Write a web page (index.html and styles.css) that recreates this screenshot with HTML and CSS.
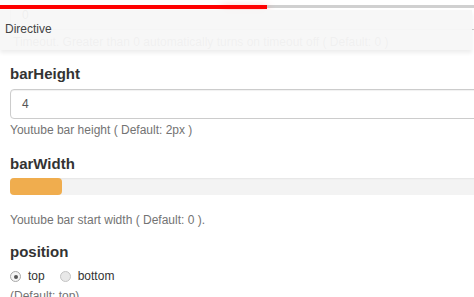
FILE: index.html
```html
<!DOCTYPE html>
<html>
<head>
<meta charset="utf-8">
<link rel="stylesheet" href="styles.css">
</head>
<body>
<div class="content">
  <div class="input ghost-input">0</div>
  <p class="help ghost-help">Timeout. Greater than 0 automatically turns on timeout off ( Default: 0 )</p>

  <h3 class="label">barHeight</h3>
  <div class="input">4</div>
  <p class="help">Youtube bar height ( Default: 2px )</p>

  <h3 class="label label-gap">barWidth</h3>
  <div class="slider"><div class="slider-fill" style="width:52px"></div></div>
  <p class="help help-slider">Youtube bar start width ( Default: 0 ).</p>

  <h3 class="label label-pos">position</h3>
  <div class="radios">
    <label class="radio"><span class="dot checked"></span>top</label>
    <label class="radio"><span class="dot"></span>bottom</label>
  </div>
  <p class="help help-last">(Default: top)</p>
</div>

<div class="topstrip">
  <div class="track"><div class="bar" style="width:267px"><div class="peg"></div></div></div>
</div>
<div class="header">Directive</div>
</body>
</html>
```

FILE: styles.css
```css
html, body {
  margin: 0;
  padding: 0;
  background: #fff;
  overflow: hidden;
}
body {
  width: 474px;
  height: 297px;
  position: relative;
  font-family: "Liberation Sans", Arial, sans-serif;
  color: #333;
}
.content {
  width: 490px;
  padding-left: 10px;
  box-sizing: border-box;
}
.input {
  box-sizing: border-box;
  height: 30px;
  border: 1px solid #ccc;
  border-radius: 4px;
  padding-left: 11px;
  font-size: 12px;
  line-height: 28px;
  color: #555;
  box-shadow: inset 0 1px 1px rgba(0,0,0,0.06);
}
.ghost-input {
  margin-top: 0;
}
.help {
  margin: 3px 0 0;
  font-size: 12px;
  line-height: 17px;
  color: #737373;
  white-space: nowrap;
}
.ghost-help {
  margin-top: 4px;
  padding-left: 3px;
}
.label {
  margin: 13px 0 5px;
  font-size: 15px;
  line-height: 20px;
  font-weight: bold;
  color: #333;
}
.label-gap {
  margin-top: 15px;
  margin-bottom: 4px;
}
.label-pos {
  margin-top: 13px;
  margin-bottom: 6px;
}
.slider {
  height: 17px;
  background: #f3f3f3;
  border-radius: 4px;
  box-shadow: inset 0 1px 2px rgba(0,0,0,0.06);
}
.slider-fill {
  height: 100%;
  background: #f0ad4e;
  border-radius: 4px;
}
.help-slider {
  margin-top: 17px;
}
.radios {
  display: flex;
  gap: 15px;
  font-size: 12px;
  line-height: 17px;
  color: #333;
}
.radio {
  display: flex;
  align-items: center;
  gap: 7px;
}
.dot {
  width: 9px;
  height: 9px;
  border-radius: 50%;
  border: 1px solid #c4c4c4;
  background: #e8e8e8;
  box-sizing: content-box;
  position: relative;
}
.dot.checked {
  background: #f4f4f4;
  border-color: #a8a8a8;
}
.dot.checked::after {
  content: "";
  position: absolute;
  left: 2.5px;
  top: 2.5px;
  width: 4px;
  height: 4px;
  border-radius: 50%;
  background: #555;
}
.help-last {
  margin-top: 3px;
}

.topstrip {
  position: absolute;
  top: 0;
  left: 0;
  width: 474px;
  height: 10px;
  background: #fff;
  padding-top: 5px;
  box-sizing: border-box;
}
.track {
  height: 3px;
  background: #d0d0d0;
  position: relative;
}
.bar {
  height: 4px;
  background: #f00;
  position: relative;
}
.peg {
  position: absolute;
  right: 0;
  top: 0;
  width: 45px;
  height: 4px;
  box-shadow: 0 2px 8px rgba(255,0,0,0.35);
}
.header {
  position: absolute;
  top: 10px;
  left: 0;
  width: 472px;
  height: 40px;
  box-sizing: border-box;
  padding: 12px 0 0 5px;
  background: rgba(247,247,247,0.95);
  box-shadow: 0 3px 4px rgba(0,0,0,0.07);
  font-size: 12px;
  line-height: 14px;
  color: #444;
}
```
